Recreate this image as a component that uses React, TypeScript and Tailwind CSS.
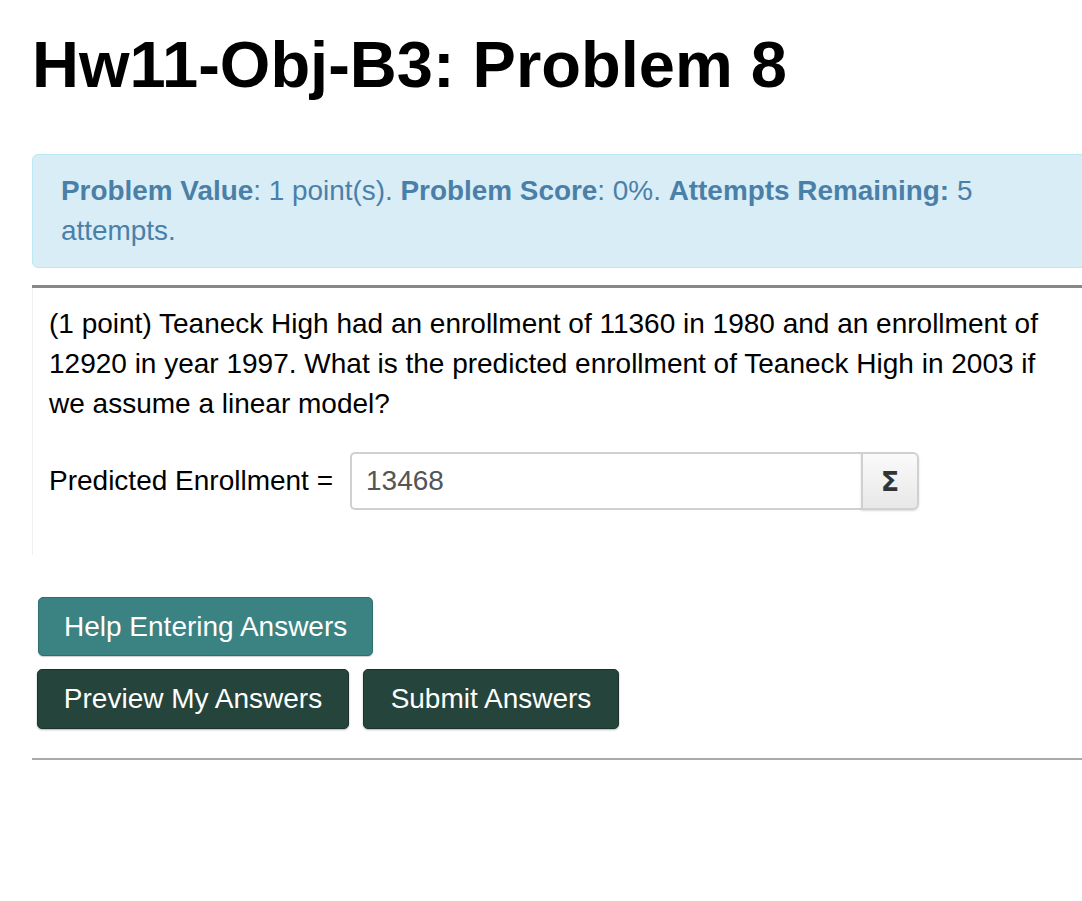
export default function App() {
  return (
    <div className="min-h-[901px] w-full overflow-hidden bg-white font-['Liberation_Sans',Arial,sans-serif] text-black">
      <div className="w-[1100px] pl-[32px]">
        <h1 className="pt-[27px] text-[65px] font-bold leading-[76px]">
          Hw11-Obj-B3: Problem 8
        </h1>

        <div className="mt-[51px] rounded-l-[6px] border border-[#bce8f1] bg-[#d9edf7] pl-[28px] pr-[120px] pt-[16px] pb-[16px] text-[27.9px] leading-[40px] text-[#4a80a8]">
          <b>Problem Value</b>: 1 point(s). <b>Problem Score</b>: 0%. <b>Attempts Remaining:</b> 5 attempts.
        </div>

        <div className="mt-[17px] border-t-[3px] border-[#888]">
          <div className="border-l border-[#f0f0f0] pl-[16px] pt-[16px] pb-[45px]">
            <p className="w-[1010px] text-[28px] leading-[40px]">
              (1 point) Teaneck High had an enrollment of 11360 in 1980 and an enrollment of 12920 in year 1997. What
              is the predicted enrollment of Teaneck High in 2003 if we assume a linear model?
            </p>
            <div className="mt-[28px] flex items-center">
              <span className="w-[301px] text-[28px]">Predicted Enrollment =</span>
              <div className="flex h-[58px]">
                <div className="flex w-[511px] items-center rounded-l-[5px] border-2 border-r-0 border-[#d0d0d0] pl-[14px] text-[28px] text-[#555]">
                  13468
                </div>
                <div className="flex w-[58px] items-center justify-center rounded-r-[6px] border-2 border-[#d0d0d0] bg-gradient-to-b from-[#fafafa] to-[#e8e8e8] shadow-[0_1px_2px_rgba(0,0,0,0.15)]">
                  <span className="font-['DejaVu_Sans',sans-serif] text-[27px] font-bold leading-none text-[#333]">Σ</span>
                </div>
              </div>
            </div>
          </div>
        </div>

        <div className="mt-[42px] flex flex-col items-start gap-[13px] pl-[6px]">
          <button className="h-[59px] rounded-[5px] border border-[#2e6e6e] bg-[#3b8282] px-[25px] text-[28px] text-white shadow-[0_1px_1px_rgba(0,0,0,0.2)]">
            Help Entering Answers
          </button>
          <div className="-ml-[1px] flex gap-[14px]">
            <button className="h-[60px] w-[312px] rounded-[5px] border border-[#1b332c] bg-[#25443b] text-[28px] text-white shadow-[0_1px_2px_rgba(0,0,0,0.3)]">
              Preview My Answers
            </button>
            <button className="h-[60px] w-[256px] rounded-[5px] border border-[#1b332c] bg-[#25443b] text-[28px] text-white shadow-[0_1px_2px_rgba(0,0,0,0.3)]">
              Submit Answers
            </button>
          </div>
        </div>

        <div className="mt-[29px] border-t-2 border-[#aaa]" />
      </div>
    </div>
  );
}
